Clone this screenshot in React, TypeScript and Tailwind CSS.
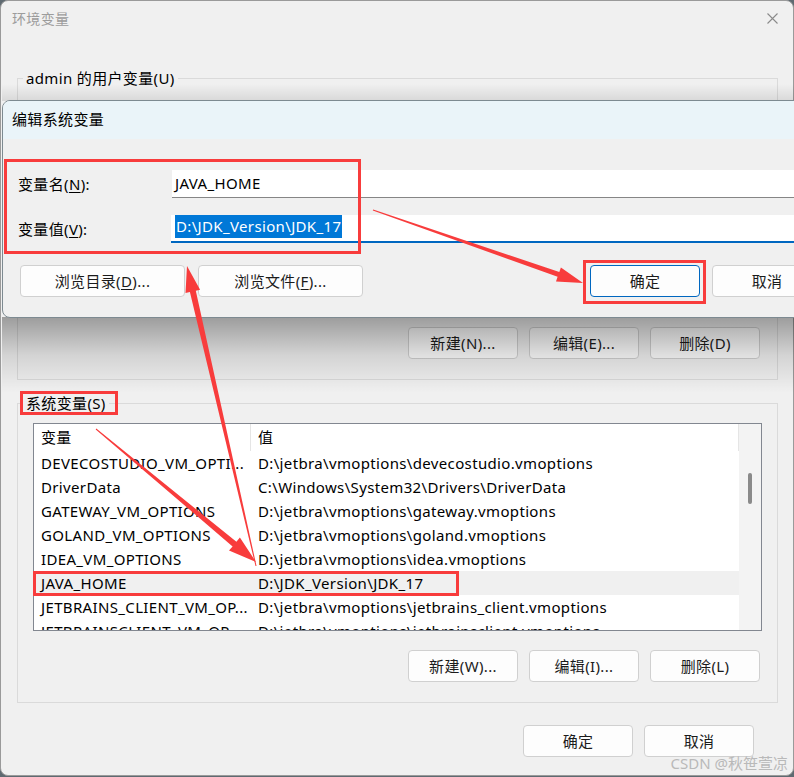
import React from 'react';
import clsx from 'clsx';

type Pt = [number, number];

// tapered annotation arrow: thin at the tail, thick shaft near the head
function arrowPoints(from: Pt, tip: Pt, w0: number, w1: number, headLen: number, headW: number) {
  const dx = tip[0] - from[0];
  const dy = tip[1] - from[1];
  const len = Math.hypot(dx, dy);
  const ux = dx / len;
  const uy = dy / len;
  const nx = -uy;
  const ny = ux;
  const bx = tip[0] - ux * headLen;
  const by = tip[1] - uy * headLen;
  const p = (x: number, y: number) => `${x.toFixed(1)},${y.toFixed(1)}`;
  return [
    p(from[0] + (nx * w0) / 2, from[1] + (ny * w0) / 2),
    p(bx + (nx * w1) / 2, by + (ny * w1) / 2),
    p(bx + (nx * headW) / 2, by + (ny * headW) / 2),
    p(tip[0], tip[1]),
    p(bx - (nx * headW) / 2, by - (ny * headW) / 2),
    p(bx - (nx * w1) / 2, by - (ny * w1) / 2),
    p(from[0] - (nx * w0) / 2, from[1] - (ny * w0) / 2),
  ].join(' ');
}

const sysVars: [string, string][] = [
  ['DEVECOSTUDIO_VM_OPTI...', 'D:\\jetbra\\vmoptions\\devecostudio.vmoptions'],
  ['DriverData', 'C:\\Windows\\System32\\Drivers\\DriverData'],
  ['GATEWAY_VM_OPTIONS', 'D:\\jetbra\\vmoptions\\gateway.vmoptions'],
  ['GOLAND_VM_OPTIONS', 'D:\\jetbra\\vmoptions\\goland.vmoptions'],
  ['IDEA_VM_OPTIONS', 'D:\\jetbra\\vmoptions\\idea.vmoptions'],
  ['JAVA_HOME', 'D:\\JDK_Version\\JDK_17'],
  ['JETBRAINS_CLIENT_VM_OP...', 'D:\\jetbra\\vmoptions\\jetbrains_client.vmoptions'],
  ['JETBRAINSCLIENT_VM_OP...', 'D:\\jetbra\\vmoptions\\jetbrainsclient.vmoptions'],
];

const userVars: [string, string][] = [
  ['OneDrive', 'C:\\Users\\admin\\OneDrive'],
  ['Path', 'C:\\Users\\admin\\AppData\\Local\\Microsoft\\WindowsApps'],
  ['TEMP', 'C:\\Users\\admin\\AppData\\Local\\Temp'],
  ['TMP', 'C:\\Users\\admin\\AppData\\Local\\Temp'],
];

function WinButton({ children, primary, className }: { children: React.ReactNode; primary?: boolean; className?: string }) {
  return (
    <button
      className={clsx(
        'h-[32px] rounded-[4px] border bg-[#fdfdfd] text-[15px] text-[#1b1b1b] flex items-center justify-center shrink-0',
        primary ? 'border-[#0067c0]' : 'border-[#d0d0d0]',
        className
      )}
    >
      {children}
    </button>
  );
}

function VarList({ rows, selected }: { rows: [string, string][]; selected?: string }) {
  return (
    <div className="mx-[15px] h-[208px] border border-[#828790] bg-white flex overflow-hidden">
      <div className="flex-1 flex flex-col overflow-hidden">
        <div className="h-[27px] flex shrink-0">
          <div className="w-[217px] pl-[7px] border-r border-[#e5e5e5] flex items-center">变量</div>
          <div className="flex-1 pl-[7px] flex items-center border-r border-[#e5e5e5]">值</div>
        </div>
        {rows.map(([name, value]) => (
          <div key={name} className={clsx('h-[24px] flex items-center shrink-0 whitespace-nowrap', name === selected && 'bg-[#f0f0f0]')}>
            <div className="w-[217px] pl-[7px] overflow-hidden">{name}</div>
            <div className="flex-1 pl-[7px] overflow-hidden">{value}</div>
          </div>
        ))}
      </div>
      <div className="w-[22px] bg-[#f3f3f3] flex flex-col items-center pt-[49px]">
        <div className="w-[4px] h-[31px] rounded-full bg-[#8a8a8a]" />
      </div>
    </div>
  );
}

export default function App() {
  const red = '#f83c3c';
  return (
    <div className="relative w-[794px] h-[777px] overflow-hidden bg-[#5f6a71] text-[15px] tracking-[0.35px] text-black font-['Noto_Sans','Noto_Sans_CJK_SC',sans-serif]">
      {/* 环境变量 window (inactive, behind) */}
      <div className="w-[794px] h-[776px] bg-[#f0f0f0] border border-[#9a9a9a] rounded-[8px] flex flex-col">
        <div className="h-[35px] shrink-0 flex items-center justify-between pl-[11px] pr-[15px]">
          <span className="text-[#9c9c9c] text-[14px]">环境变量</span>
          <svg width="11" height="11" viewBox="0 0 11 11" className="text-[#8a8a8a]">
            <path d="M0.5 0.5 L10.5 10.5 M10.5 0.5 L0.5 10.5" stroke="currentColor" strokeWidth="1.1" />
          </svg>
        </div>

        <fieldset className="mt-[32px] ml-[16px] w-[761px] border border-[#dadada] pb-[20px]">
          <legend className="ml-[5px] px-[3px] h-[20px] leading-[20px]">admin 的用户变量(U)</legend>
          <div className="pt-[12px]">
            <VarList rows={userVars} />
          </div>
          <div className="mt-[19px] flex justify-end gap-[11px] pr-[17px]">
            <WinButton className="w-[110px]">新建(N)...</WinButton>
            <WinButton className="w-[110px]">编辑(E)...</WinButton>
            <WinButton className="w-[110px]">删除(D)</WinButton>
          </div>
        </fieldset>

        <fieldset className="mt-[13px] ml-[16px] w-[761px] border border-[#dadada] pb-[20px]">
          <legend className="ml-[5px] px-[3px] h-[20px] leading-[20px]">系统变量(S)</legend>
          <div className="pt-[10px]">
            <VarList rows={sysVars} selected="JAVA_HOME" />
          </div>
          <div className="mt-[19px] flex justify-end gap-[11px] pr-[17px]">
            <WinButton className="w-[110px]">新建(W)...</WinButton>
            <WinButton className="w-[110px]">编辑(I)...</WinButton>
            <WinButton className="w-[110px]">删除(L)</WinButton>
          </div>
        </fieldset>

        <div className="mt-[22px] flex justify-end gap-[11px] pr-[39px]">
          <WinButton className="w-[110px]">确定</WinButton>
          <WinButton className="w-[110px]">取消</WinButton>
        </div>
      </div>

      {/* drop shadow of the modal dialog, cast onto the window behind */}
      <div className="absolute left-[2px] top-[84px] w-[792px] h-[17px] bg-linear-to-t from-black/10 to-transparent pointer-events-none" />
      <div className="absolute left-[2px] top-[317px] w-[792px] h-[76px] bg-linear-to-b from-black/35 via-black/12 to-transparent pointer-events-none" />

      {/* 编辑系统变量 dialog on top */}
      <div className="absolute left-[2px] top-[100px] w-[860px] rounded-l-[8px] border border-[#7d8a91] bg-[#f0f0f0] overflow-hidden">
        <div className="h-[38px] bg-[#eaf4f9] flex items-center pl-[9px] pb-[1px]">编辑系统变量</div>
        <div className="pt-[31px] pb-[20px]">
          <div className="flex h-[28px]">
            <div className="w-[169px] pl-[15px] flex items-center shrink-0">
              变量名(<span className="underline underline-offset-2">N</span>):
            </div>
            <div className="flex-1 bg-white border-b border-[#868686] pl-[3px] flex items-center">JAVA_HOME</div>
          </div>
          <div className="flex h-[28px] mt-[17px]">
            <div className="w-[168px] pl-[15px] flex items-center shrink-0">
              变量值(<span className="underline underline-offset-2">V</span>):
            </div>
            <div className="flex-1 bg-white border-b-2 border-[#0067c0] pl-[4px] flex items-start">
              <span className="bg-[#0078d7] text-white leading-[23px] pl-[1px] pr-[1px]">D:\JDK_Version\JDK_17</span>
            </div>
          </div>
          <div className="flex mt-[22px]">
            <WinButton className="ml-[17px] w-[165px]">
              浏览目录(<span className="underline underline-offset-2">D</span>)...
            </WinButton>
            <WinButton className="ml-[13px] w-[165px]">
              浏览文件(<span className="underline underline-offset-2">F</span>)...
            </WinButton>
            <WinButton primary className="ml-[227px] w-[110px]">确定</WinButton>
            <WinButton className="ml-[12px] w-[110px]">取消</WinButton>
          </div>
        </div>
      </div>

      {/* watermark */}
      <div className="absolute right-[6px] bottom-[3px] text-[15px] tracking-normal text-[#b9b9b9] whitespace-nowrap">CSDN @秋笹萱凉</div>

      {/* red annotations */}
      <svg className="absolute inset-0 pointer-events-none" width="794" height="777" viewBox="0 0 794 777">
        <g fill="none" stroke={red} strokeWidth="3">
          <rect x="5.5" y="160.5" width="354" height="92" />
          <rect x="584.5" y="261.5" width="120" height="41" />
          <rect x="21.5" y="392.5" width="95" height="21" />
          <rect x="34.5" y="572.5" width="423" height="22" />
        </g>
        <g fill={red}>
          <polygon points={arrowPoints([373, 210], [583, 283], 1, 5, 26, 15)} />
          <polygon points={arrowPoints([256, 566], [187, 266], 1, 6, 26, 15)} />
          <polygon points={arrowPoints([96, 429], [256, 562], 1, 6, 28, 17)} />
        </g>
      </svg>
    </div>
  );
}
